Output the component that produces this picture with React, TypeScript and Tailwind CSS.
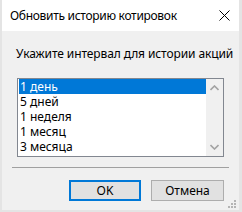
import React, { useState } from 'react';

const ITEMS = ['1 день', '5 дней', '1 неделя', '1 месяц', '3 месяца'];

const App: React.FC = () => {
  const [selected, setSelected] = useState(0);

  return (
    <div className="w-[242px] h-[212px] bg-[#e4e4e4] pl-[2px] pr-[3px] pb-[2px] font-['Noto_Sans',sans-serif] text-[12px] text-black overflow-hidden">
      <div className="h-full flex flex-col bg-[#f0f0f0]">
        {/* Title bar */}
        <div className="h-[31px] shrink-0 bg-white flex items-center justify-between pl-[8px] pr-[9px]">
          <span className="leading-none tracking-[-0.3px]">Обновить историю котировок</span>
          <svg width="11" height="11" viewBox="0 0 11 11">
            <path d="M0.5 0.5 L10.5 10.5 M10.5 0.5 L0.5 10.5" stroke="#000" strokeWidth="1" />
          </svg>
        </div>

        {/* Body */}
        <div className="flex-1 flex flex-col relative">
          <div className="pl-[14px] mt-[15px] leading-[15px] tracking-[-0.1px]">Укажите интервал для истории акций</div>

          {/* Listbox */}
          <div className="ml-[15px] mt-[17px] w-[207px] h-[79px] border border-[#828790] bg-white flex">
            <div className="flex-1 pl-px">
              {ITEMS.map((item, i) => (
                <div
                  key={item}
                  onClick={() => setSelected(i)}
                  className={`h-[15px] leading-[15px] pl-px overflow-hidden ${
                    i === selected ? 'bg-[#0078d7] text-white' : ''
                  }`}
                >
                  {item}
                </div>
              ))}
            </div>
            <div className="w-[17px] bg-[#f0f0f0] flex flex-col justify-between items-center py-[6px]">
              <svg width="9" height="6" viewBox="0 0 9 6">
                <path d="M0.5 5 L4.5 1 L8.5 5" fill="none" stroke="#a3a3a3" strokeWidth="1.6" />
              </svg>
              <svg width="9" height="6" viewBox="0 0 9 6">
                <path d="M0.5 1 L4.5 5 L8.5 1" fill="none" stroke="#a3a3a3" strokeWidth="1.6" />
              </svg>
            </div>
          </div>

          {/* Separator */}
          <div className="ml-[10px] mt-[10px] w-[217px] h-px bg-[#a0a0a0]" />

          {/* Buttons */}
          <div className="flex mt-[12px] ml-[67px] gap-[10px]">
            <button className="w-[72px] h-[21px] border-2 border-[#0078d7] bg-[#e1e1e1] flex items-center justify-center leading-none">
              OK
            </button>
            <button className="w-[73px] h-[21px] border border-[#adadad] bg-[#e1e1e1] flex items-center justify-center leading-none">
              Отмена
            </button>
          </div>

          {/* Resize grip */}
          <svg className="absolute right-[2px] bottom-[1px]" width="9" height="9" viewBox="0 0 9 9">
            <rect x="6" y="0" width="2" height="2" fill="#b4b4b4" />
            <rect x="3" y="3" width="2" height="2" fill="#b4b4b4" />
            <rect x="6" y="3" width="2" height="2" fill="#b4b4b4" />
            <rect x="0" y="6" width="2" height="2" fill="#b4b4b4" />
            <rect x="3" y="6" width="2" height="2" fill="#b4b4b4" />
            <rect x="6" y="6" width="2" height="2" fill="#b4b4b4" />
          </svg>
        </div>
      </div>
    </div>
  );
};

export default App;
